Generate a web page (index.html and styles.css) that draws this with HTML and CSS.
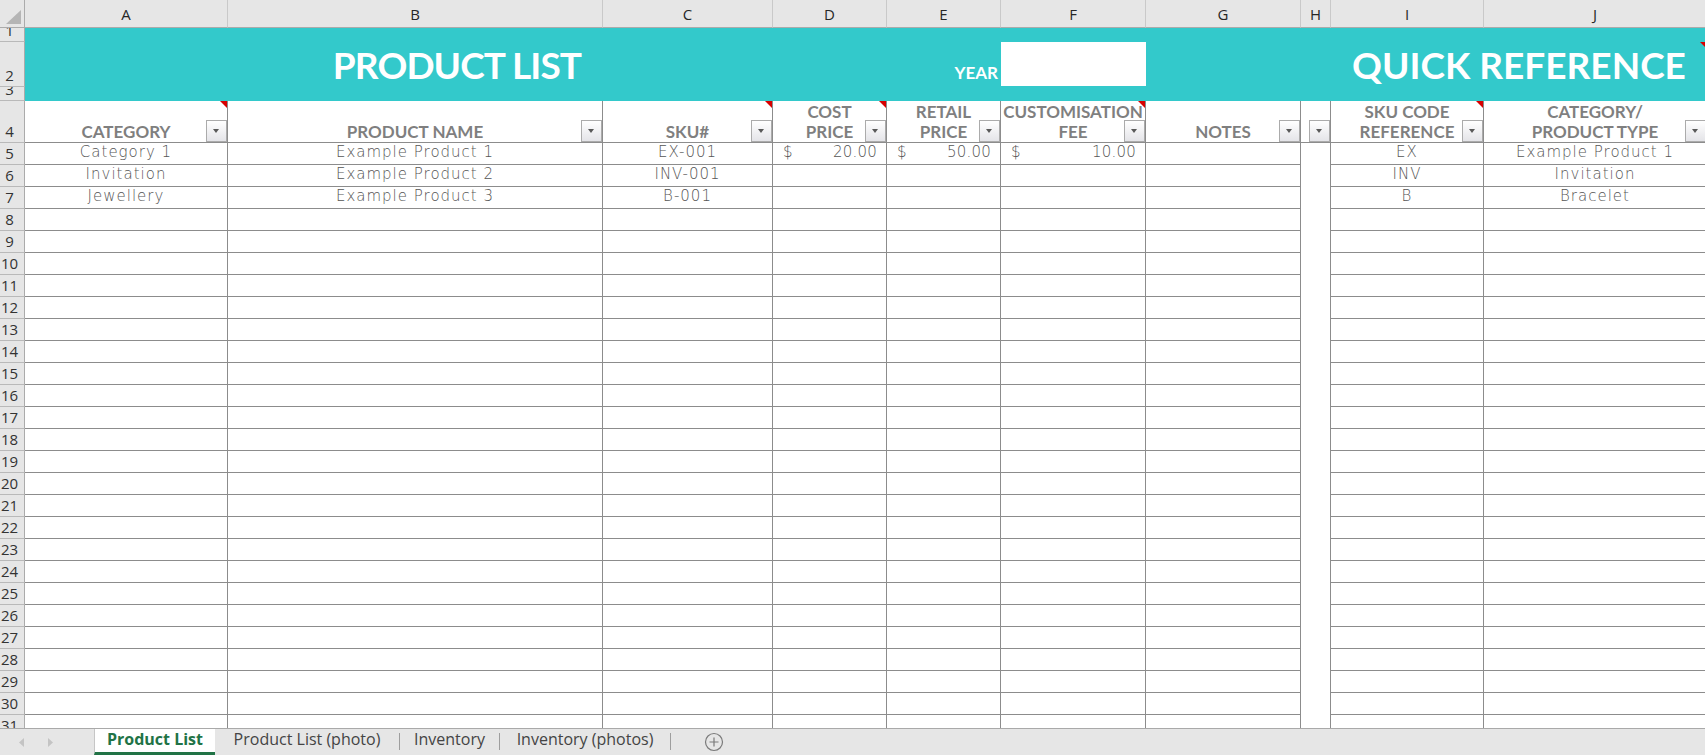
FILE: index.html
```html
<!DOCTYPE html>
<html lang="en">
<head>
<meta charset="utf-8">
<title>Product List</title>
<link rel="stylesheet" href="styles.css">
</head>
<body>
<div class="app">
  <div class="sheet">
    <div class="row colhead">
      <div class="corner"><svg width="15" height="14" viewBox="0 0 15 14"><polygon points="15,0 15,14 0,14" fill="#b5b5b5"/></svg></div>
      <div class="ch">A</div><div class="ch">B</div><div class="ch">C</div><div class="ch">D</div><div class="ch">E</div><div class="ch">F</div><div class="ch">G</div><div class="ch">H</div><div class="ch">I</div><div class="ch">J</div>
    </div>
    <div class="banner">
      <div class="rh">1</div><div class="teal span10"></div>
      <div class="rh">2</div>
      <div class="teal title span4 pl">PRODUCT LIST</div>
      <div class="teal year">YEAR</div>
      <div class="ybox"></div>
      <div class="teal span2"></div>
      <div class="teal title span2 qr">QUICK REFERENCE<span class="note"></span></div>
      <div class="rh">3</div><div class="teal span10"></div>
    </div>
    <div class="row hdr">
      <div class="rh">4</div>
      <div class="hd">CATEGORY<span class="note"></span><span class="fb"></span></div>
      <div class="hd">PRODUCT NAME<span class="fb"></span></div>
      <div class="hd">SKU#<span class="note"></span><span class="fb"></span></div>
      <div class="hd">COST<br>PRICE<span class="note"></span><span class="fb"></span></div>
      <div class="hd">RETAIL<br>PRICE<span class="fb"></span></div>
      <div class="hd">CUSTOMISATION<br>FEE<span class="note"></span><span class="fb"></span></div>
      <div class="hd">NOTES<span class="fb"></span></div>
      <div class="hd"><span class="fb"></span></div>
      <div class="hd">SKU CODE<br>REFERENCE<span class="note"></span><span class="fb"></span></div>
      <div class="hd">CATEGORY/<br>PRODUCT TYPE<span class="fb"></span></div>
    </div>
    <div class="row">
      <div class="rh">5</div>
      <div class="d">Category 1</div><div class="d">Example Product 1</div><div class="d">EX-001</div>
      <div class="d m"><span>$</span><span>20.00</span></div><div class="d m"><span>$</span><span>50.00</span></div><div class="d m"><span>$</span><span>10.00</span></div>
      <i></i><i class="h"></i><div class="d">EX</div><div class="d">Example Product 1</div>
    </div>
    <div class="row">
      <div class="rh">6</div>
      <div class="d">Invitation</div><div class="d">Example Product 2</div><div class="d">INV-001</div>
      <i></i><i></i><i></i><i></i><i class="h"></i><div class="d">INV</div><div class="d">Invitation</div>
    </div>
    <div class="row">
      <div class="rh">7</div>
      <div class="d">Jewellery</div><div class="d">Example Product 3</div><div class="d">B-001</div>
      <i></i><i></i><i></i><i></i><i class="h"></i><div class="d">B</div><div class="d">Bracelet</div>
    </div>
    <div class="row"><div class="rh">8</div><i></i><i></i><i></i><i></i><i></i><i></i><i></i><i class="h"></i><i></i><i></i></div>
    <div class="row"><div class="rh">9</div><i></i><i></i><i></i><i></i><i></i><i></i><i></i><i class="h"></i><i></i><i></i></div>
    <div class="row"><div class="rh">10</div><i></i><i></i><i></i><i></i><i></i><i></i><i></i><i class="h"></i><i></i><i></i></div>
    <div class="row"><div class="rh">11</div><i></i><i></i><i></i><i></i><i></i><i></i><i></i><i class="h"></i><i></i><i></i></div>
    <div class="row"><div class="rh">12</div><i></i><i></i><i></i><i></i><i></i><i></i><i></i><i class="h"></i><i></i><i></i></div>
    <div class="row"><div class="rh">13</div><i></i><i></i><i></i><i></i><i></i><i></i><i></i><i class="h"></i><i></i><i></i></div>
    <div class="row"><div class="rh">14</div><i></i><i></i><i></i><i></i><i></i><i></i><i></i><i class="h"></i><i></i><i></i></div>
    <div class="row"><div class="rh">15</div><i></i><i></i><i></i><i></i><i></i><i></i><i></i><i class="h"></i><i></i><i></i></div>
    <div class="row"><div class="rh">16</div><i></i><i></i><i></i><i></i><i></i><i></i><i></i><i class="h"></i><i></i><i></i></div>
    <div class="row"><div class="rh">17</div><i></i><i></i><i></i><i></i><i></i><i></i><i></i><i class="h"></i><i></i><i></i></div>
    <div class="row"><div class="rh">18</div><i></i><i></i><i></i><i></i><i></i><i></i><i></i><i class="h"></i><i></i><i></i></div>
    <div class="row"><div class="rh">19</div><i></i><i></i><i></i><i></i><i></i><i></i><i></i><i class="h"></i><i></i><i></i></div>
    <div class="row"><div class="rh">20</div><i></i><i></i><i></i><i></i><i></i><i></i><i></i><i class="h"></i><i></i><i></i></div>
    <div class="row"><div class="rh">21</div><i></i><i></i><i></i><i></i><i></i><i></i><i></i><i class="h"></i><i></i><i></i></div>
    <div class="row"><div class="rh">22</div><i></i><i></i><i></i><i></i><i></i><i></i><i></i><i class="h"></i><i></i><i></i></div>
    <div class="row"><div class="rh">23</div><i></i><i></i><i></i><i></i><i></i><i></i><i></i><i class="h"></i><i></i><i></i></div>
    <div class="row"><div class="rh">24</div><i></i><i></i><i></i><i></i><i></i><i></i><i></i><i class="h"></i><i></i><i></i></div>
    <div class="row"><div class="rh">25</div><i></i><i></i><i></i><i></i><i></i><i></i><i></i><i class="h"></i><i></i><i></i></div>
    <div class="row"><div class="rh">26</div><i></i><i></i><i></i><i></i><i></i><i></i><i></i><i class="h"></i><i></i><i></i></div>
    <div class="row"><div class="rh">27</div><i></i><i></i><i></i><i></i><i></i><i></i><i></i><i class="h"></i><i></i><i></i></div>
    <div class="row"><div class="rh">28</div><i></i><i></i><i></i><i></i><i></i><i></i><i></i><i class="h"></i><i></i><i></i></div>
    <div class="row"><div class="rh">29</div><i></i><i></i><i></i><i></i><i></i><i></i><i></i><i class="h"></i><i></i><i></i></div>
    <div class="row"><div class="rh">30</div><i></i><i></i><i></i><i></i><i></i><i></i><i></i><i class="h"></i><i></i><i></i></div>
    <div class="row"><div class="rh">31</div><i></i><i></i><i></i><i></i><i></i><i></i><i></i><i class="h"></i><i></i><i></i></div>
  </div>
  <div class="tabs">
    <div class="nav">
      <svg width="40" height="12" viewBox="0 0 40 12"><polygon points="6,1 6,10 1,5.5" fill="#c4c4c4"/><polygon points="30,1 30,10 35,5.5" fill="#c4c4c4"/></svg>
    </div>
    <div class="tab active">Product List</div>
    <div class="tab t2">Product List (photo)</div>
    <span class="sep"></span>
    <div class="tab t3">Inventory</div>
    <span class="sep"></span>
    <div class="tab t4">Inventory (photos)</div>
    <span class="sep"></span>
    <div class="add"><svg width="20" height="20" viewBox="0 0 20 20"><circle cx="10" cy="10" r="8.5" fill="none" stroke="#7a7a7a" stroke-width="1.2"/><path d="M10 5.5v9M5.5 10h9" stroke="#7a7a7a" stroke-width="1.2"/></svg></div>
  </div>
</div>
</body>
</html>
```
FILE: styles.css
```css
:root {
  --cols: 25px 203px 375px 170px 114px 114px 145px 155px 30px 153px 223px;
  --line: #8c8c8c;
  --teal: #33c9cb;
}
* { box-sizing: border-box; margin: 0; padding: 0; }
html, body { width: 1705px; height: 755px; overflow: hidden; background: #fff; }
body { font-family: "DejaVu Sans", sans-serif; }
.app { display: flex; flex-direction: column; height: 755px; width: 1705px; overflow: hidden; }
.sheet { height: 728px; overflow: hidden; flex: none; }

.row, .banner {
  display: grid;
  grid-template-columns: var(--cols);
  width: 1707px;
}
.row { height: 22px; }
.colhead { height: 28px; }
.hdr { height: 42px; }
.banner { grid-template-rows: 14px 45px 14px; }

.corner {
  background: #e6e6e6;
  border-right: 1px solid #ababab;
  border-bottom: 1px solid #ababab;
  display: flex;
  align-items: flex-end;
  justify-content: flex-end;
  padding: 0 3px 3px 0;
}
.corner svg { display: block; }
.ch {
  background: #e6e6e6;
  border-right: 1px solid #c9c9c9;
  border-bottom: 1px solid #ababab;
  font-family: "Open Sans", sans-serif;
  font-size: 15px;
  line-height: 21px;
  color: #262626;
  display: flex;
  align-items: flex-end;
  justify-content: center;
  padding-bottom: 2px;
}
.rh {
  background: #e6e6e6;
  border-right: 1px solid #ababab;
  border-bottom: 1px solid #b9b9b9;
  font-family: "Open Sans", sans-serif;
  font-size: 15px;
  line-height: 21px;
  color: #333;
  display: flex;
  align-items: flex-end;
  justify-content: center;
  padding-right: 5px;
  overflow: hidden;
}

.teal { background: var(--teal); }
.span10 { grid-column: span 10; }
.span4 { grid-column: span 4; }
.span2 { grid-column: span 2; }
.title {
  font-family: Lato, sans-serif;
  font-weight: 700;
  font-size: 37px;
  line-height: 37px;
  color: #fff;
  display: flex;
  align-items: flex-end;
  justify-content: center;
  padding-bottom: 4px;
  white-space: nowrap;
}
.pl { letter-spacing: -0.9px; padding-left: 2px; }
.qr { position: relative; }
.year {
  font-family: Lato, sans-serif;
  font-weight: 700;
  font-size: 17px;
  line-height: 17px;
  color: #fff;
  display: flex;
  align-items: flex-end;
  justify-content: flex-end;
  padding: 0 3px 6px 0;
}
.ybox { background: #fff; border-bottom: 1px solid var(--teal); }

.hd {
  position: relative;
  border-right: 1px solid var(--line);
  border-bottom: 1px solid var(--line);
  font-family: Lato, sans-serif;
  font-weight: 700;
  font-size: 17px;
  line-height: 20px;
  color: #7f7f7f;
  display: flex;
  flex-direction: column;
  justify-content: flex-end;
  text-align: center;
  white-space: nowrap;
}
.note {
  position: absolute;
  top: 0;
  right: 0;
  width: 0;
  height: 0;
  border-top: 7px solid #d80000;
  border-left: 7px solid transparent;
}
.fb {
  position: absolute;
  right: 0;
  bottom: 0;
  width: 21px;
  height: 22px;
  border: 1px solid #ababab;
  background: linear-gradient(#ffffff, #e4e4e8);
}
.fb::after {
  content: "";
  position: absolute;
  left: 6px;
  top: 8px;
  border-top: 4px solid #595959;
  border-left: 3.5px solid transparent;
  border-right: 3.5px solid transparent;
}

.row > i, .row > .d {
  border-right: 1px solid var(--line);
  border-bottom: 1px solid var(--line);
}
.row > .h { border-bottom: 0; }
.d {
  font-family: "DejaVu Sans", sans-serif;
  font-weight: 200;
  font-size: 15px;
  letter-spacing: 1px;
  line-height: 18px;
  color: #555;
  text-align: center;
  white-space: nowrap;
  overflow: hidden;
}
.m {
  display: flex;
  justify-content: space-between;
  padding: 0 9px 0 10px;
  letter-spacing: 0.2px;
}

.tabs {
  flex: none;
  height: 27px;
  display: flex;
  align-items: stretch;
  background: #e6e6e6;
  border-top: 1px solid #a9a9a9;
  font-family: "Open Sans", sans-serif;
  font-size: 16px;
  line-height: 20px;
  color: #444;
}
.nav { width: 94px; padding: 8px 0 0 18px; }
.nav svg { display: block; }
.tab { display: flex; justify-content: center; white-space: nowrap; }
.active {
  width: 121px;
  background: #fff;
  color: #217346;
  font-weight: 700;
  border-left: 1px solid #c6c6c6;
  border-bottom: 3px solid #217346;
}
.t2 { width: 184px; }
.t3 { width: 99px; }
.t4 { width: 170px; }
.sep { width: 1px; background: #9e9e9e; margin: 4px 0 5px; }
.add { margin-left: 33px; padding-top: 3px; }
.add svg { display: block; }
```
